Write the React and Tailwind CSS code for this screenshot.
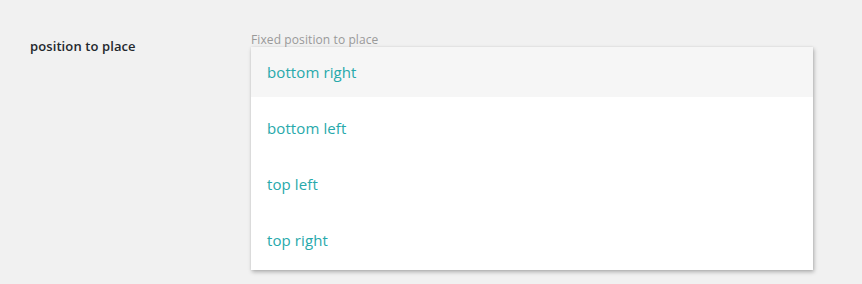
import React from "react";

const items = ["bottom right", "bottom left", "top left", "top right"];

export default function App() {
  return (
    <div
      className="w-[862px] h-[284px] bg-[#f1f1f1] flex"
      style={{ fontFamily: '"Open Sans", "Noto Sans", sans-serif' }}
    >
      <div className="w-[251px] pl-[30px] pt-[37px]">
        <div className="text-[13px] font-semibold text-[#23282d] leading-[18px] tracking-[0.1px]">
          position to place
        </div>
      </div>
      <div className="flex flex-col pt-[33px]">
        <div className="text-[12px] leading-[14px] text-[#999999] h-[14px] tracking-[0.1px]">
          Fixed position to place
        </div>
        <div className="w-[562px] bg-white pb-[5px] shadow-[1px_2px_4px_rgba(0,0,0,0.28),0_0_2px_rgba(0,0,0,0.08)]">
          {items.map((t, i) => (
            <div
              key={t}
              className={
                i === 0
                  ? "h-[50px] flex items-center pl-[16px] bg-[#f6f6f6] text-[15px] text-[#27a9ab] tracking-[0.1px]"
                  : "h-[56px] flex items-center pl-[16px] pt-[6px] text-[15px] text-[#27a9ab] tracking-[0.1px]"
              }
            >
              {t}
            </div>
          ))}
        </div>
      </div>
    </div>
  );
}
